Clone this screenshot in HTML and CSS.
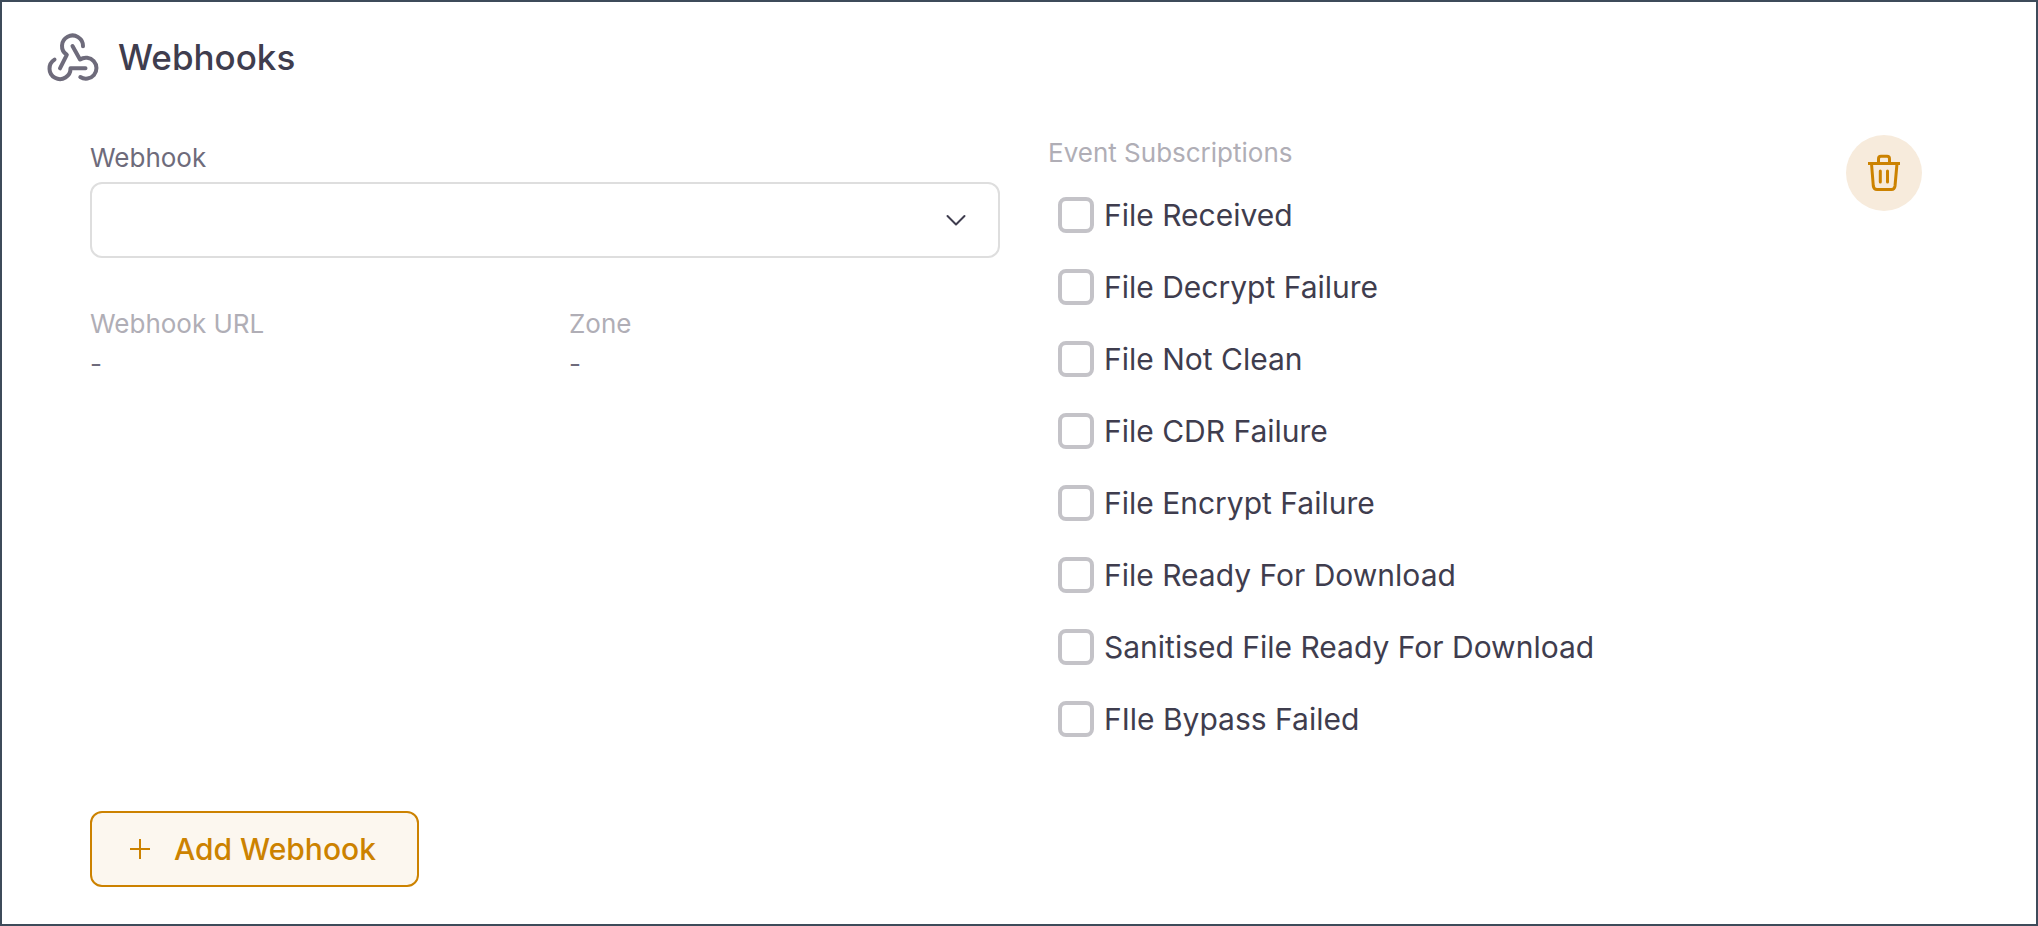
FILE: index.html
```html
<!DOCTYPE html>
<html lang="en">
<head>
  <meta charset="UTF-8">
  <meta name="viewport" content="width=device-width, initial-scale=1">
  <title>Webhooks</title>
  <link rel="stylesheet" href="styles.css">
</head>
<body>
  <main class="panel">
    <header class="panel-header">
      <svg class="icon-webhook" viewBox="0 0 50 46" fill="none" aria-hidden="true">
        <path d="M35 12.300A10.500 10.500 0 1 0 18.800 20.800L12 34.300"/>
        <path d="M24.500 12L32 25.500A10.500 10.500 0 1 1 32.300 43"/>
        <path d="M6.500 25.600A10.500 10.500 0 1 0 22.500 34.300H37.500"/>
      </svg>
      <h2>Webhooks</h2>
    </header>

    <form class="webhook-form">
      <div class="webhook-row">
        <div class="webhook-details">
          <div class="field">
            <label for="webhook">Webhook</label>
            <div class="select-wrap">
              <select id="webhook" name="webhook">
                <option value=""></option>
              </select>
              <svg class="icon-chevron" viewBox="0 0 20 12" fill="none" aria-hidden="true">
                <path d="M1.500 2L10 10.500L18.500 2"/>
              </svg>
            </div>
          </div>
          <dl class="info">
            <div>
              <dt>Webhook URL</dt>
              <dd>-</dd>
            </div>
            <div>
              <dt>Zone</dt>
              <dd>-</dd>
            </div>
          </dl>
        </div>

        <div class="webhook-events">
          <fieldset>
            <legend>Event Subscriptions</legend>
            <label class="check"><input type="checkbox" name="received">File Received</label>
            <label class="check"><input type="checkbox" name="decrypt">File Decrypt Failure</label>
            <label class="check"><input type="checkbox" name="notclean">File Not Clean</label>
            <label class="check"><input type="checkbox" name="cdr">File CDR Failure</label>
            <label class="check"><input type="checkbox" name="encrypt">File Encrypt Failure</label>
            <label class="check"><input type="checkbox" name="ready">File Ready For Download</label>
            <label class="check"><input type="checkbox" name="sanitised">Sanitised File Ready For Download</label>
            <label class="check"><input type="checkbox" name="bypass">FIle Bypass Failed</label>
          </fieldset>
          <button type="button" class="btn-delete" aria-label="Delete webhook">
            <svg class="icon-trash" viewBox="0 0 32 36" fill="none" aria-hidden="true">
              <path d="M0 8.500H32"/>
              <path d="M10.500 8.500V4Q10.500 1.300 13 1.300H19Q21.500 1.300 21.500 4V8.500"/>
              <path d="M3.500 8.500L5.300 31Q5.800 34.500 9 34.500H23.500Q26.500 34.500 27 31L29 8.500"/>
              <path class="bars" d="M12.300 16V27M19.500 16V27"/>
            </svg>
          </button>
        </div>
      </div>

      <button type="button" class="btn-add">
        <svg class="icon-plus" viewBox="0 0 20 20" aria-hidden="true">
          <path d="M10 0V20M0 10H20"/>
        </svg>
        Add Webhook
      </button>
    </form>
  </main>
</body>
</html>
```

FILE: styles.css
```css
* {
  box-sizing: border-box;
}
body {
  font-family: Inter, "Liberation Sans", sans-serif;
  font-size: 30px;
  line-height: 40px;
  color: #3f3d4e;
  background-color: white;
  margin: 0;
}
.panel {
  min-height: 100vh;
  padding: 32px 30px 36px 46px;
  border: 2px solid #3d4b5a;
}
.panel-header {
  display: flex;
  align-items: center;
  gap: 20px;
}
h2 {
  margin: 0;
  font-size: 35px;
  line-height: 46px;
  font-weight: 500;
}
svg {
  display: block;
  overflow: visible;
  stroke-linecap: round;
  stroke-linejoin: round;
}
.icon-webhook {
  width: 50px;
  height: 46px;
  stroke: #6e6b7b;
  stroke-width: 4;
}
.webhook-form {
  padding: 55px 0 0 42px;
}
.webhook-row {
  display: grid;
  grid-template-columns: 1fr 1fr;
}
.field {
  padding: 5px 48px 0 0;
}
.field label {
  display: block;
  margin-bottom: 6px;
  font-size: 26px;
  line-height: 36px;
  color: #6e6b7b;
}
.select-wrap {
  position: relative;
}
select {
  display: block;
  appearance: none;
  width: 100%;
  height: 76px;
  padding: 0 72px 0 24px;
  border: 2px solid #dedede;
  border-radius: 12px;
  background: white;
  color: inherit;
  font: inherit;
}
.icon-chevron {
  position: absolute;
  right: 34px;
  top: 32px;
  width: 20px;
  height: 12px;
  stroke: #3f3d4e;
  stroke-width: 2;
  pointer-events: none;
}
.info {
  display: grid;
  grid-template-columns: 1fr 1fr;
  margin: 48px 0 0;
  font-size: 26px;
  line-height: 36px;
}
dt, legend {
  color: #b0aeb6;
}
dd {
  margin: 4px 0 0;
  color: #6e6b7b;
}
.webhook-events {
  display: flex;
  justify-content: space-between;
  align-items: flex-start;
  padding-right: 84px;
}
fieldset {
  margin: 0;
  padding: 0;
  border: none;
}
legend {
  padding: 0 0 8px;
  font-size: 26px;
  line-height: 36px;
}
.check {
  display: flex;
  align-items: center;
  gap: 10px;
  height: 72px;
  padding-left: 10px;
}
.check input {
  appearance: none;
  width: 36px;
  height: 36px;
  margin: 0;
  border: 4px solid #c4c3c8;
  border-radius: 8px;
  background: white;
}
.check input:checked {
  background: #cc8200;
}
button {
  display: flex;
  align-items: center;
  cursor: pointer;
}
.btn-delete {
  justify-content: center;
  width: 76px;
  height: 76px;
  padding: 0;
  border: none;
  border-radius: 50%;
  background: #f7ebdc;
}
.icon-trash {
  width: 32px;
  height: 36px;
  stroke: #cc8200;
  stroke-width: 3;
  stroke-linecap: butt;
}
.icon-trash .bars {
  stroke-linecap: round;
}
.btn-add {
  gap: 24px;
  height: 76px;
  margin-top: 56px;
  padding: 0 41px 0 38px;
  border: 2px solid #cc8200;
  border-radius: 12px;
  background: #fcf7ef;
  color: #cc8200;
  font: inherit;
  font-weight: 500;
}
.icon-plus {
  width: 20px;
  height: 20px;
  stroke: #cc8200;
  stroke-width: 2;
  stroke-linecap: butt;
}
```
